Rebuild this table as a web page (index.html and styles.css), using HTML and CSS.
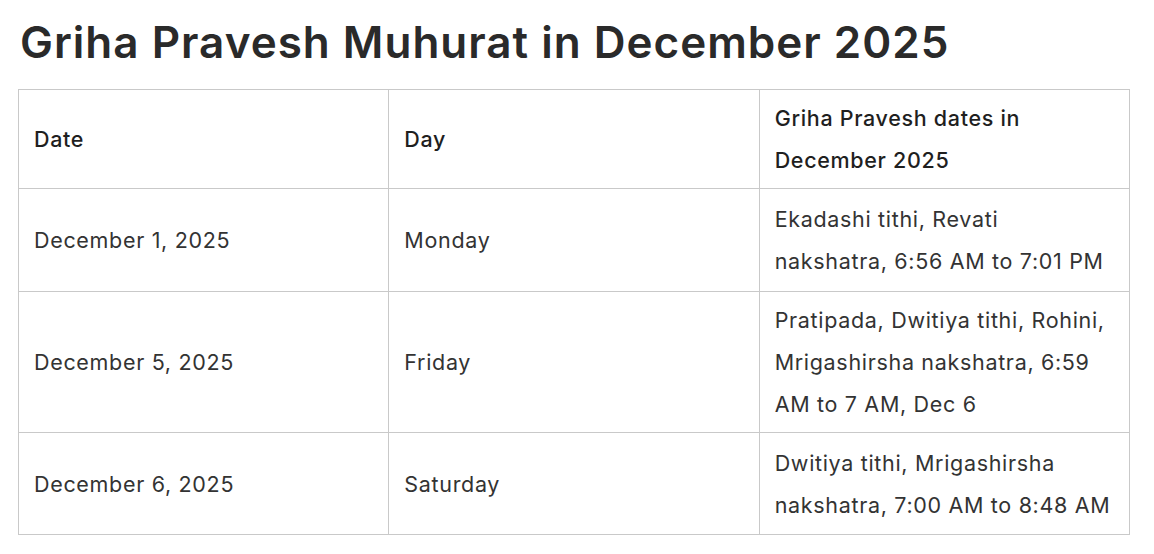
FILE: index.html
```html
<!DOCTYPE html>
<html>
<head>
<meta charset="utf-8">
<link rel="stylesheet" href="styles.css">
</head>
<body>
<div class="page">
  <h2 class="title">Griha Pravesh Muhurat in December 2025</h2>
  <table class="muhurat">
    <thead>
      <tr>
        <th>Date</th>
        <th>Day</th>
        <th>Griha Pravesh dates in December 2025</th>
      </tr>
    </thead>
    <tbody>
      <tr class="r1">
        <td>December 1, 2025</td>
        <td>Monday</td>
        <td>Ekadashi tithi, Revati nakshatra, 6:56 AM to 7:01 PM</td>
      </tr>
      <tr class="r2">
        <td>December 5, 2025</td>
        <td>Friday</td>
        <td>Pratipada, Dwitiya tithi, Rohini, Mrigashirsha nakshatra, 6:59 AM to 7 AM, Dec 6</td>
      </tr>
      <tr class="r3">
        <td>December 6, 2025</td>
        <td>Saturday</td>
        <td>Dwitiya tithi, Mrigashirsha nakshatra, 7:00 AM to 8:48 AM</td>
      </tr>
    </tbody>
  </table>
</div>
</body>
</html>
```

FILE: styles.css
```css
html, body {
  margin: 0;
  padding: 0;
  background: #ffffff;
}
.page {
  padding: 18px 25px 0 18px;
  font-family: Inter, "Noto Sans", sans-serif;
}
.title {
  margin: 0 0 22px 2px;
  font-size: 44px;
  font-weight: 600;
  line-height: 49px;
  color: #2a2a2a;
  letter-spacing: 1px;
}
.muhurat {
  width: 1112px;
  border-collapse: collapse;
  table-layout: fixed;
  font-size: 21.5px;
  line-height: 42px;
  letter-spacing: 0.68px;
  color: #333333;
}
.muhurat th,
.muhurat td {
  border: 1px solid #c9c9c9;
  padding: 7px 14px 7px 15px;
  text-align: left;
  vertical-align: middle;
}
.muhurat th {
  font-weight: 500;
  color: #1f1f1f;
  height: 84px;
}
.muhurat .r1 td { height: 88px; }
.muhurat .r3 td { height: 87px; }
```
